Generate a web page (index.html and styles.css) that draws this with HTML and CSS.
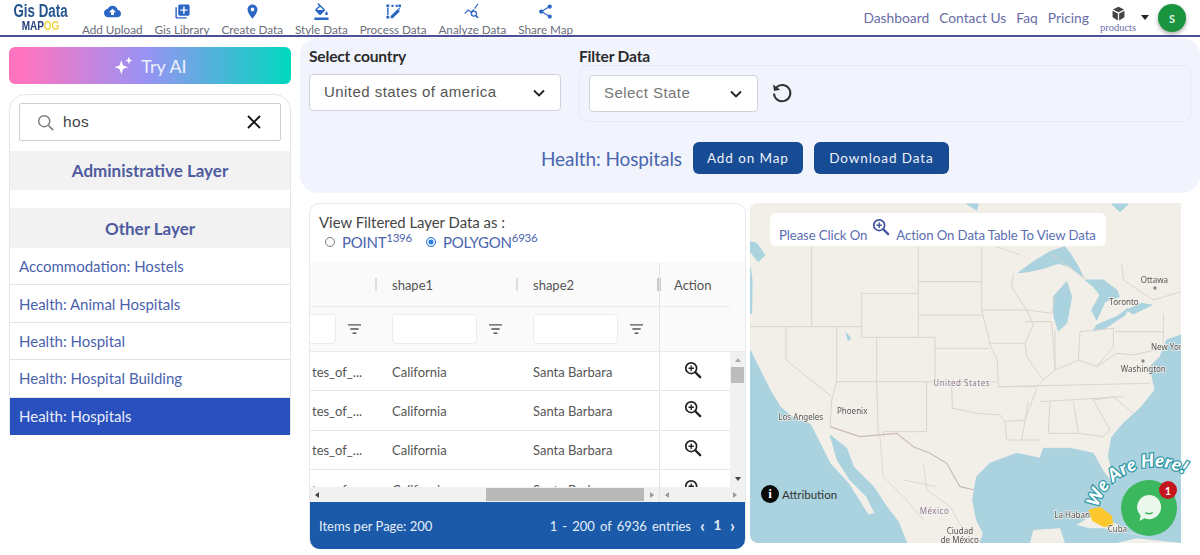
FILE: index.html
```html
<!DOCTYPE html>
<html lang="en">
<head>
<meta charset="utf-8">
<title>GIS Data MAPOG</title>
<link rel="stylesheet" href="styles.css">
</head>
<body>
<svg class="defs" width="0" height="0" aria-hidden="true">
  <symbol id="zoomin" viewBox="0 0 20 20">
    <circle cx="8" cy="8" r="6" fill="none" stroke="currentColor" stroke-width="1.9"/>
    <path d="M12.5 12.5L18 18" stroke="currentColor" stroke-width="2.6" stroke-linecap="round"/>
    <path d="M8 5v6M5 8h6" stroke="currentColor" stroke-width="1.5"/>
  </symbol>
  <symbol id="filter" viewBox="0 0 14 12">
    <path d="M0 1.5h14M2.5 6h9M5 10.5h4" stroke="#555" stroke-width="1.5"/>
  </symbol>
  <symbol id="chev" viewBox="0 0 12 8">
    <path d="M1 1.5l5 5 5-5" fill="none" stroke="#222" stroke-width="1.9"/>
  </symbol>
</svg>

<header class="topbar">
  <div class="logo">
    <span class="logo-top">Gis Data</span>
    <span class="logo-bottom">MAP<span class="logo-og">OG</span></span>
  </div>
  <nav class="tools">
    <a class="tool"><svg class="ico" viewBox="0 0 24 24"><path d="M19.35 10.04C18.67 6.59 15.64 4 12 4 9.11 4 6.6 5.64 5.35 8.04 2.34 8.36 0 10.91 0 14c0 3.31 2.69 6 6 6h13c2.76 0 5-2.24 5-5 0-2.64-2.05-4.78-4.65-4.96zM14 13v4h-4v-4H7l5-5 5 5h-3z"/></svg>Add Upload</a>
    <a class="tool"><svg class="ico" viewBox="0 0 24 24"><path d="M4 6H2v14c0 1.1.9 2 2 2h14v-2H4V6zm16-4H8c-1.1 0-2 .9-2 2v12c0 1.1.9 2 2 2h12c1.1 0 2-.9 2-2V4c0-1.1-.9-2-2-2zm-1 9h-4v4h-2v-4H9V9h4V5h2v4h4v2z"/></svg>Gis Library</a>
    <a class="tool"><svg class="ico" viewBox="0 0 24 24"><path d="M12 2C8.13 2 5 5.13 5 9c0 5.25 7 13 7 13s7-7.75 7-13c0-3.87-3.13-7-7-7zm0 9.5c-1.38 0-2.5-1.12-2.5-2.5s1.12-2.5 2.5-2.5 2.5 1.12 2.5 2.5-1.12 2.5-2.5 2.5z"/></svg>Create Data</a>
    <a class="tool"><svg class="ico" viewBox="0 0 24 24"><path d="M16.56 8.94L7.62 0 6.21 1.41l2.38 2.38-5.15 5.15c-.59.59-.59 1.54 0 2.12l5.5 5.5c.29.29.68.44 1.06.44s.77-.15 1.06-.44l5.5-5.5c.59-.58.59-1.53 0-2.12zM5.21 10L10 5.21 14.79 10H5.21zM19 11.5s-2 2.17-2 3.5c0 1.1.9 2 2 2s2-.9 2-2c0-1.33-2-3.5-2-3.5zM2 20.5h20V24H2z"/></svg>Style Data</a>
    <a class="tool"><svg class="ico" viewBox="0 0 24 24"><path d="M2 2h4v4H2zM9 2.500h3v3H9zM15 2.500h3v3h-3zM19 2h3.500v4H19zM2 18h4v4H2zM3 7h2v10H3zM19 7h2v2h-2zM8 18.500l10-10 3 3-10 10H8z"/></svg>Process Data</a>
    <a class="tool"><svg class="ico" viewBox="0 0 24 24"><path d="M1 15l5-5 4 3 4-4" fill="none" stroke="currentColor" stroke-width="1.6"/><path d="M15 8l5-7" fill="none" stroke="currentColor" stroke-width="1.6"/><circle cx="14" cy="15" r="3.6" fill="none" stroke="currentColor" stroke-width="1.8"/><path d="M16.5 17.5L20 21" stroke="currentColor" stroke-width="2"/></svg>Analyze Data</a>
    <a class="tool"><svg class="ico" viewBox="0 0 24 24"><path d="M18 16.08c-.76 0-1.44.3-1.96.77L8.91 12.7c.05-.23.09-.46.09-.7s-.04-.47-.09-.7l7.05-4.11c.54.5 1.25.81 2.04.81 1.66 0 3-1.34 3-3s-1.34-3-3-3-3 1.34-3 3c0 .24.04.47.09.7L8.04 9.81C7.5 9.31 6.79 9 6 9c-1.66 0-3 1.34-3 3s1.34 3 3 3c.79 0 1.5-.31 2.04-.81l7.12 4.16c-.05.21-.08.43-.08.65 0 1.61 1.31 2.92 2.92 2.92s2.92-1.31 2.92-2.92-1.31-2.92-2.92-2.92z"/></svg>Share Map</a>
  </nav>
  <nav class="links">
    <a>Dashboard</a><a>Contact Us</a><a>Faq</a><a>Pricing</a>
  </nav>
  <div class="products">
    <svg class="cube" viewBox="0 0 24 24"><path d="M12 1l9 4.5-9 4.5-9-4.5zM2.5 7.5l8.5 4.3V23l-8.5-5zM21.5 7.500l-8.500 4.300V23l8.500-5z"/></svg>
    <span>products</span>
  </div>
  <span class="caret"></span>
  <div class="avatar">S</div>
</header>

<main class="layout">
  <aside class="side">
    <button class="try-ai">
      <svg class="spark" viewBox="0 0 24 24"><path d="M10 5l2.200 6.300L18 13.500l-5.800 2.200L10 22l-2.200-6.300L2 13.500l5.800-2.200zM19 1l1.200 3.300L23 5.500l-2.800 1.200L19 10l-1.200-3.300L15 5.500l2.800-1.200z"/></svg>
      Try AI
    </button>
    <section class="layers">
      <div class="search">
        <svg class="search-ico" viewBox="0 0 20 20"><circle cx="8.500" cy="8.500" r="6.500" fill="none" stroke="#777" stroke-width="1.600"/><path d="M13.500 13.500L19 19" stroke="#777" stroke-width="1.800"/></svg>
        <span class="search-text">hos</span>
        <svg class="close-ico" viewBox="0 0 14 14"><path d="M1 1l12 12M13 1L1 13" stroke="#111" stroke-width="1.800"/></svg>
      </div>
      <h3 class="layer-head">Administrative Layer</h3>
      <h3 class="layer-head layer-head-other">Other Layer</h3>
      <ul class="layer-list">
        <li>Accommodation: Hostels</li>
        <li>Health: Animal Hospitals</li>
        <li>Health: Hospital</li>
        <li>Health: Hospital Building</li>
        <li class="active">Health: Hospitals</li>
      </ul>
    </section>
  </aside>

  <div class="content">
    <section class="filters">
      <div class="filter-row">
        <div class="country">
          <label class="field-label">Select country</label>
          <div class="select select-country"><span>United states of america</span><svg class="chev"><use href="#chev"/></svg></div>
        </div>
        <div class="filter">
          <label class="field-label">Filter Data</label>
          <div class="filter-box">
            <div class="select select-state"><span>Select State</span><svg class="chev"><use href="#chev"/></svg></div>
            <svg class="reset" viewBox="0 0 24 24"><path d="M6.200 6.500A8.200 8.200 0 1 1 4 12.500" fill="none" stroke="#333" stroke-width="2"/><path d="M3 3.500l1 6.500 6.300-1.200z" fill="#333"/></svg>
          </div>
        </div>
      </div>
      <div class="action-row">
        <span class="layer-name">Health: Hospitals</span>
        <button class="btn btn-add">Add on Map</button>
        <button class="btn btn-dl">Download Data</button>
      </div>
    </section>

    <div class="panes">
      <section class="data-card">
        <div class="view-as">
          <p class="view-title">View Filtered Layer Data as :</p>
          <div class="radios">
            <span class="radio"></span><span class="radio-label">POINT<sup>1396</sup></span>
            <span class="radio radio-on"></span><span class="radio-label">POLYGON<sup>6936</sup></span>
          </div>
        </div>
        <div class="table">
          <div class="t-row t-head">
            <div class="c"><i class="sep"></i></div>
            <div class="c">shape1<i class="sep"></i></div>
            <div class="c">shape2<i class="sep sep-strong"></i></div>
            <div class="c c-action">Action</div>
          </div>
          <div class="t-row t-filter">
            <div class="c c-clip"><span class="f-input f-input-cut"></span><svg class="f-ico"><use href="#filter"/></svg></div>
            <div class="c"><span class="f-input"></span><svg class="f-ico"><use href="#filter"/></svg></div>
            <div class="c"><span class="f-input"></span><svg class="f-ico"><use href="#filter"/></svg></div>
            <div class="c c-action"></div>
          </div>
          <div class="t-body">
            <div class="t-rows">
              <div class="t-row t-data"><div class="c c-cut">tes_of_...</div><div class="c">California</div><div class="c">Santa Barbara</div><div class="c c-action"><svg class="act"><use href="#zoomin"/></svg></div></div>
              <div class="t-row t-data"><div class="c c-cut">tes_of_...</div><div class="c">California</div><div class="c">Santa Barbara</div><div class="c c-action"><svg class="act"><use href="#zoomin"/></svg></div></div>
              <div class="t-row t-data"><div class="c c-cut">tes_of_...</div><div class="c">California</div><div class="c">Santa Barbara</div><div class="c c-action"><svg class="act"><use href="#zoomin"/></svg></div></div>
              <div class="t-row t-data"><div class="c c-cut">tes_of_...</div><div class="c">California</div><div class="c">Santa Barbara</div><div class="c c-action"><svg class="act"><use href="#zoomin"/></svg></div></div>
            </div>
            <div class="v-scroll">
              <span class="tri tri-up"></span>
              <span class="v-thumb"></span>
              <span class="tri tri-down"></span>
            </div>
          </div>
          <div class="h-scroll">
            <div class="h-main">
              <span class="tri tri-left"></span>
              <span class="h-track"><span class="h-thumb"></span></span>
              <span class="tri tri-right tri-soft"></span>
            </div>
            <div class="h-side">
              <span class="tri tri-left tri-soft"></span>
              <span class="tri tri-right tri-soft"></span>
            </div>
          </div>
        </div>
        <footer class="pager">
          <span>Items per Page: 200</span>
          <span class="pager-right"><span class="entries">1 - 200 of 6936 entries</span><b class="pg">‹</b><b class="pg pg-num">1</b><b class="pg">›</b></span>
        </footer>
      </section>

      <section class="map">
        <svg class="map-svg" viewBox="0 9 1293 1020" preserveAspectRatio="none">
          <rect x="0" y="9" width="1293" height="1020" fill="#f2efe9"/>
          <g class="water">
            <path d="M0 450L20 490 60 570 90 620 125 650 180 672 195 700 240 790 295 850 355 945 375 940 350 890 300 840 262 780 240 705 290 745 310 800 370 860 410 920 445 965 470 1029H0z"/>
            <path d="M1293 405L1250 420 1230 470 1200 500 1215 570 1170 625 1120 670 1085 712 1075 770 1100 862 1060 815 1030 760 960 745 880 745 870 775 800 760 720 790 680 830 668 900 680 960 700 1000 690 1029H1293z"/>
            <path d="M805 218L850 185 900 155 945 140 960 160 985 200 1000 232 960 200 925 190 880 205 835 215zM910 290L950 245 965 290 950 370 925 392 912 350zM1005 240L1060 240 1100 270 1108 290 1065 305 1040 360 1025 330 1050 285 1030 260zM1030 392L1040 375 1100 350 1135 325 1125 345 1065 385zM1130 330L1175 310 1205 315 1150 342z"/>
            <path d="M0 200L6 240 5 340H0zM0 125L20 130 45 165 25 185 0 155zM1085 12L1135 12 1110 35zM650 12L685 12 680 30zM288 398L303 415 295 422z"/>
          </g>
          <g fill="#f2efe9">
            <path d="M1100 1029L1160 1015 1293 1029zM840 1029L850 990 930 985 945 1029z"/>
            <path d="M980 975L1020 950 1080 960 1140 1000 1220 1020 1130 995 1060 985 1020 985z"/>
          </g>
          <g class="borders">
            <path d="M0 380H335M185 140V380M335 280V412H555M335 280H505M505 140V412M505 245H695M505 345H695M555 412V445H718M380 415V545M555 445V545M260 545H740"/>
            <path d="M695 140V330H830M695 330L720 430H825L850 375 830 330M718 430L742 480 745 560H860L880 540 830 470 825 430"/>
            <path d="M108 380V480L245 590M260 380V545M260 545L245 600 240 680M380 545L385 712M530 545V695H400V712"/>
            <path d="M605 560L607 625 680 640 750 645 765 665 825 660 860 565M765 665L770 720H815M835 605L815 720 870 720M900 605L895 700H985L970 605M985 700L1060 710 1080 690 1030 600"/>
            <path d="M790 220L785 260 830 330 905 340 915 290M825 365H905L915 510 880 540M915 392V510L985 480 990 395M990 395L1090 385V440L1040 500 985 480M745 560L1200 550M870 605L1120 590M1030 600L1090 590 1150 640M1040 500L1100 460 1150 465 1215 450M1095 395H1240M1240 340V430"/>
            <path d="M740 140L810 165M900 160L1010 240M1115 190L1120 240 1210 300 1293 275"/>
          </g>
          <path class="border-mx" d="M240 680L330 710 440 700 490 740 540 760 590 790 630 860 675 870"/>
          <path class="borders-mx" d="M390 712L400 830 470 900 520 960M520 790L530 870 600 920 640 990M460 840L560 860"/>
          <path d="M1020 932L1050 925 1082 950 1086 976 1060 976 1030 960z" fill="#fcc82e" stroke="#fcc82e" stroke-width="8" stroke-linejoin="round"/>
          <g class="map-labels">
            <text x="1172" y="250">Ottawa</text>
            <text x="1078" y="316">Toronto</text>
            <text x="1203" y="450">New York</text>
            <text x="1112" y="515">Washington</text>
            <text class="lbl-country" x="550" y="557">United States</text>
            <text x="261" y="642">Phoenix</text>
            <text x="85" y="660">Los Angeles</text>
            <text class="lbl-country" x="509" y="941">México</text>
            <text x="913" y="953">La Haban</text>
            <text x="590" y="1001">Ciudad</text>
            <text x="572" y="1028">de México</text>
            <text x="1073" y="996">Cuba</text>
          </g>
          <circle cx="1215" cy="264" r="5" fill="#888"/>
          <circle cx="1179" cy="483" r="5" fill="#888"/>
        </svg>
        <div class="map-hint"><span>Please Click On</span><svg class="hint-ico"><use href="#zoomin"/></svg><span>Action On Data Table To View Data</span></div>
        <div class="attrib"><span class="attrib-i">i</span>Attribution</div>
      </section>
    </div>
  </div>
</main>

<div class="chat">
  <svg class="chat-label" viewBox="0 0 120 90">
    <path id="arc" d="M18 58C26 22 82 -2 119 36" fill="none"/>
    <text class="chat-text"><textPath href="#arc">We Are Here!</textPath></text>
  </svg>
  <div class="chat-ball">
    <svg class="chat-bubble" viewBox="0 0 30 30"><path d="M15 1a13 13 0 1 1-5 25L5 29l1-6A13 13 0 0 1 15 1z" fill="#e9f7ec"/><path d="M11 20q4 2.500 8 0" fill="none" stroke="#3bb75e" stroke-width="1.500"/></svg>
  </div>
  <span class="chat-badge">1</span>
</div>
</body>
</html>
```
FILE: styles.css
```css
* { box-sizing: border-box; }
html, body { margin: 0; height: 555px; overflow: hidden; }
body { font-family: Lato, "Noto Sans", sans-serif; background: #fff; color: #333; position: relative; }
.defs { position: absolute; }

.topbar { height: 37px; display: flex; align-items: stretch; border-bottom: 2px solid #4d5098; padding-left: 15px; background: #fff; }
.logo { width: 52px; display: flex; flex-direction: column; align-items: center; font-family: "Liberation Sans", sans-serif; font-weight: 700; padding-top: 4px; color: #24558f; white-space: nowrap; }
.logo-top { font-size: 18px; line-height: 15px; transform: scaleX(.74); }
.logo-bottom { font-size: 13.500px; line-height: 13px; color: #27407f; transform: scaleX(.74); }
.logo-og { color: #efd640; }
.tools { display: flex; gap: 12px; margin: 0 0 -1px 15px; }
.tool { display: flex; flex-direction: column; align-items: center; justify-content: flex-end; font-size: 11.700px; color: #6b6e78; white-space: nowrap; line-height: 14px; }
.ico { width: 17px; height: 17px; fill: #2b66c4; color: #2b66c4; margin-bottom: 2px; }
.links { display: flex; gap: 10px; margin-left: auto; align-items: center; font-size: 13.800px; color: #686ca6; padding-bottom: 1px; }
.products { width: 40px; margin-left: 9px; display: flex; flex-direction: column; align-items: center; font-family: "Liberation Serif", serif; font-size: 10.500px; line-height: 9px; color: #6a6da8; padding-top: 6px; }
.cube { width: 15px; height: 15px; fill: #444; margin-bottom: 2px; }
.caret { width: 0; height: 0; border-left: 4.500px solid transparent; border-right: 4.500px solid transparent; border-top: 5px solid #222; margin: 15px 0 0 3px; }
.avatar { width: 28px; height: 28px; border-radius: 50%; background: #1b9440; color: #e8f5ea; font-size: 11px; font-weight: 700; display: flex; align-items: center; justify-content: center; margin: 4px 14px 0 9px; box-shadow: 0 2px 4px rgba(0,0,0,.35); position: relative; }

.layout { display: grid; grid-template-columns: 282px 1fr; column-gap: 9px; padding-left: 9px; height: 518px; }
.side { padding-top: 10px; }
.try-ai { display: flex; align-items: center; justify-content: center; gap: 8px; width: 100%; height: 37px; border: 0; border-radius: 6px; background: linear-gradient(90deg, #ff74bf 5%, #9a92f4 48%, #00d8be 100%); color: #eef1fb; font: 18px Lato, sans-serif; }
.spark { width: 20px; height: 20px; fill: #fff; }
.layers { margin-top: 10px; height: 340px; border: 1px solid #e6e6e6; border-top-left-radius: 16px; border-top-right-radius: 16px; background: #fff; padding-top: 8px; }
.search { display: flex; align-items: center; height: 38px; margin: 0 9px; border: 1px solid #cfcfcf; border-radius: 2px; padding: 0 19px 0 17px; }
.search-ico { width: 17px; height: 17px; }
.search-text { font-family: "Liberation Sans", sans-serif; font-size: 15.500px; color: #444; margin-left: 9px; letter-spacing: .4px; flex: 1; }
.close-ico { width: 14px; height: 14px; }
.layer-head { margin: 10px 0 0; height: 39px; background: #f2f2f2; display: flex; align-items: center; justify-content: center; color: #4f5ba0; font-size: 17px; font-weight: 700; }
.layer-head-other { margin-top: 18px; height: 40px; }
.layer-list { list-style: none; margin: 0; padding: 0; }
.layer-list li { height: 37.400px; display: flex; align-items: center; padding-left: 9px; font-size: 15px; color: #4a62ad; border-bottom: 1px solid #e3e3e3; }
.layer-list .active { background: #2a50bd; color: #e9edfa; border-bottom: 0; }

.content { display: flex; flex-direction: column; min-width: 0; }
.filters { height: 155px; margin-top: 1px; background: #f1f4fd; border-radius: 18px; padding: 10px 9px 0; }
.filter-row { display: flex; gap: 18px; }
.field-label { display: block; font-size: 15.600px; font-weight: 700; color: #2b2b2b; line-height: 17px; letter-spacing: -.2px; }
.country { width: 252px; }
.select { display: flex; align-items: center; justify-content: space-between; background: #fff; border: 1px solid #cfd2da; border-radius: 4px; height: 37px; font-family: "Liberation Sans", sans-serif; font-size: 15px; letter-spacing: .45px; color: #555; }
.select span { padding-bottom: 2px; }
.select-country { margin-top: 9px; padding: 0 15px 0 14px; }
.filter { flex: 1; }
.filter-box { display: flex; align-items: center; height: 57px; border: 1px solid #e7eaf6; border-radius: 9px; padding: 0 9px; }
.select-state { width: 169px; padding: 0 15px 0 14px; color: #777; }
.chev { width: 12px; height: 8px; }
.reset { width: 24px; height: 24px; margin-left: 12px; margin-top: -2px; }
.action-row { display: flex; align-items: center; margin-top: 20px; padding-left: 232px; }
.layer-name { font-size: 19px; color: #4a64ae; margin-right: 11px; letter-spacing: -.1px; }
.btn { height: 32px; border: 0; border-radius: 6px; background: #174b94; color: #eef2fa; font: 13.500px Lato, sans-serif; letter-spacing: .9px; }
.btn-add { width: 110px; }
.btn-dl { width: 135px; margin-left: 11px; }

.panes { display: flex; gap: 4px; padding: 10px 0 0 9px; }
.data-card { width: 437px; height: 346px; border: 1px solid #eaeaea; border-bottom: 0; border-radius: 10px; display: flex; flex-direction: column; overflow: hidden; background: #fff; }
.view-as { height: 58px; padding: 9px 0 0 9px; }
.view-title { margin: 0; font-size: 14.900px; line-height: 18px; color: #444; }
.radios { display: flex; align-items: center; padding-left: 5px; height: 21px; color: #4a64ae; font-size: 15px; }
.radio { width: 10px; height: 10px; border-radius: 50%; border: 1px solid #777; background: #fff; margin-left: 1px; }
.radio-on { border: 1.500px solid #2a7be4; box-shadow: inset 0 0 0 1.500px #fff; background: #2a7be4; margin-left: 14px; }
.radio-label { margin-left: 7px; letter-spacing: -.25px; }
.radio-label sup { font-size: 11.500px; line-height: 0; vertical-align: 6px; }
.table { display: flex; flex-direction: column; }
.t-row { display: grid; grid-template-columns: 67px 141px 141px 71px; }
.t-head { height: 45px; padding-top: 1px; background: #fafafa; border-bottom: 1px solid #eaeaea; font-size: 13.500px; color: #555; margin-right: 15px; box-shadow: 15px 0 0 #fafafa; }
.c { position: relative; display: flex; align-items: center; padding-left: 15px; min-width: 0; font-size: 13px; color: #555; }
.sep { position: absolute; right: 0; top: 15px; width: 2px; height: 13px; background: #dedede; }
.sep-strong { width: 4px; background: #c9c9c9; right: -2px; }
.c-action { border-left: 1px solid #e3e3e3; padding-left: 14px; }
.t-filter { height: 45px; background: #fafafa; border-bottom: 1px solid #eaeaea; padding-right: 15px; }
.f-input { width: 85px; height: 30px; background: #fff; border: 1px solid #ececec; border-radius: 4px; flex: none; }
.f-input-cut { width: 26px; margin-left: -15px; border-left: 0; border-radius: 0 4px 4px 0; }
.f-ico { width: 13px; height: 12px; margin-left: 12px; flex: none; }
.t-body { display: flex; height: 135px; }
.t-rows { width: 420px; overflow: hidden; }
.t-data { height: 39.300px; border-bottom: 1px solid #e6e6e6; padding-top: 1px; }
.c-cut { padding-left: 2px; }
.act { width: 18px; height: 18px; color: #222; margin: -4px 0 0 10px; }
.v-scroll { width: 15px; background: #f1f1f1; position: relative; display: flex; flex-direction: column; align-items: center; padding-top: 6px; }
.v-thumb { width: 13px; height: 16px; background: #bcbcbc; margin-top: 5px; }
.tri { width: 0; height: 0; display: block; flex: none; }
.tri-up { border: 3.500px solid transparent; border-top: 0; border-bottom: 4px solid #aaa; }
.tri-down { border: 3.500px solid transparent; border-bottom: 0; border-top: 4px solid #444; margin-top: auto; margin-bottom: 6px; }
.tri-left { border: 3.500px solid transparent; border-left: 0; border-right: 4px solid #444; }
.tri-right { border: 3.500px solid transparent; border-right: 0; border-left: 4px solid #444; }
.tri-soft.tri-left { border-right-color: #999; }
.tri-soft.tri-right { border-left-color: #999; }
.h-scroll { display: flex; height: 15px; background: #f1f1f1; }
.h-main { width: 349px; display: flex; align-items: center; padding: 0 5px; }
.h-track { flex: 1; height: 13px; display: flex; padding-left: 167px; }
.h-thumb { width: 158px; height: 13px; background: #b9b9b9; }
.h-side { flex: 1; display: flex; align-items: center; justify-content: space-between; padding: 0 8px 0 5px; border-left: 1px solid #e3e3e3; }
.pager { height: 47px; background: #1a5aa8; color: #e6eefa; display: flex; align-items: center; justify-content: space-between; padding: 0 5px 0 9px; font-size: 13px; }
.pager-right { display: flex; align-items: center; }
.entries { margin-right: 4px; word-spacing: 1.800px; }
.pg { width: 15px; text-align: center; font-size: 17px; font-weight: 700; line-height: 1; }
.pg-num { font-size: 13.500px; }

.map { position: relative; width: 431px; height: 340px; border-radius: 8px 0 0 8px; overflow: hidden; }
.map-svg { display: block; width: 431px; height: 340px; filter: blur(.4px); }
.water { fill: #aad3df; stroke: #aad3df; stroke-width: 3; stroke-linejoin: round; }
.borders { fill: none; stroke: #dbd4cd; stroke-width: 3; }
.border-mx { fill: none; stroke: #c9b8bc; stroke-width: 3.500; }
.borders-mx { fill: none; stroke: #dfd8d1; stroke-width: 3; }
.map-labels text { font: 24px "Noto Sans", sans-serif; fill: #555; paint-order: stroke; stroke: #f4f1ec; stroke-width: 4; }
.map-labels .lbl-country { fill: #8f7a92; letter-spacing: 1.500px; }
.map-hint { position: absolute; left: 20px; top: 10px; width: 336px; height: 33px; background: #fff; border-radius: 6px; padding: 14px 0 0 9px; display: flex; align-items: flex-start; font-size: 13.200px; line-height: 16px; color: #5b6eb2; white-space: nowrap; letter-spacing: -.1px; }
.hint-ico { width: 18px; height: 18px; color: #3f51a0; margin: -9px 6px 0 5px; flex: none; }
.attrib { position: absolute; left: 11px; top: 282px; display: flex; align-items: center; gap: 3px; font-size: 11.500px; color: #333; }
.attrib-i { width: 18px; height: 18px; border-radius: 50%; background: #0a0a0a; color: #fff; font: 700 13px "Liberation Serif", serif; display: flex; align-items: center; justify-content: center; }

.chat { position: absolute; left: 1080px; top: 445px; width: 120px; height: 100px; }
.chat-label { position: absolute; left: 0; top: 5px; width: 120px; height: 90px; overflow: visible; }
.chat-text { font: italic 900 18px Lato, sans-serif; fill: #fff; stroke: #2f97a6; stroke-width: 2.500; paint-order: stroke; letter-spacing: .4px; }
.chat-ball { position: absolute; left: 41px; top: 35px; width: 56px; height: 56px; border-radius: 50%; background: #3bb75e; display: flex; align-items: center; justify-content: center; }
.chat-bubble { width: 28px; height: 28px; }
.chat-badge { position: absolute; left: 79px; top: 36px; width: 18px; height: 18px; border-radius: 50%; background: #c4161c; color: #fff; font-size: 11px; font-weight: 700; display: flex; align-items: center; justify-content: center; }
```
